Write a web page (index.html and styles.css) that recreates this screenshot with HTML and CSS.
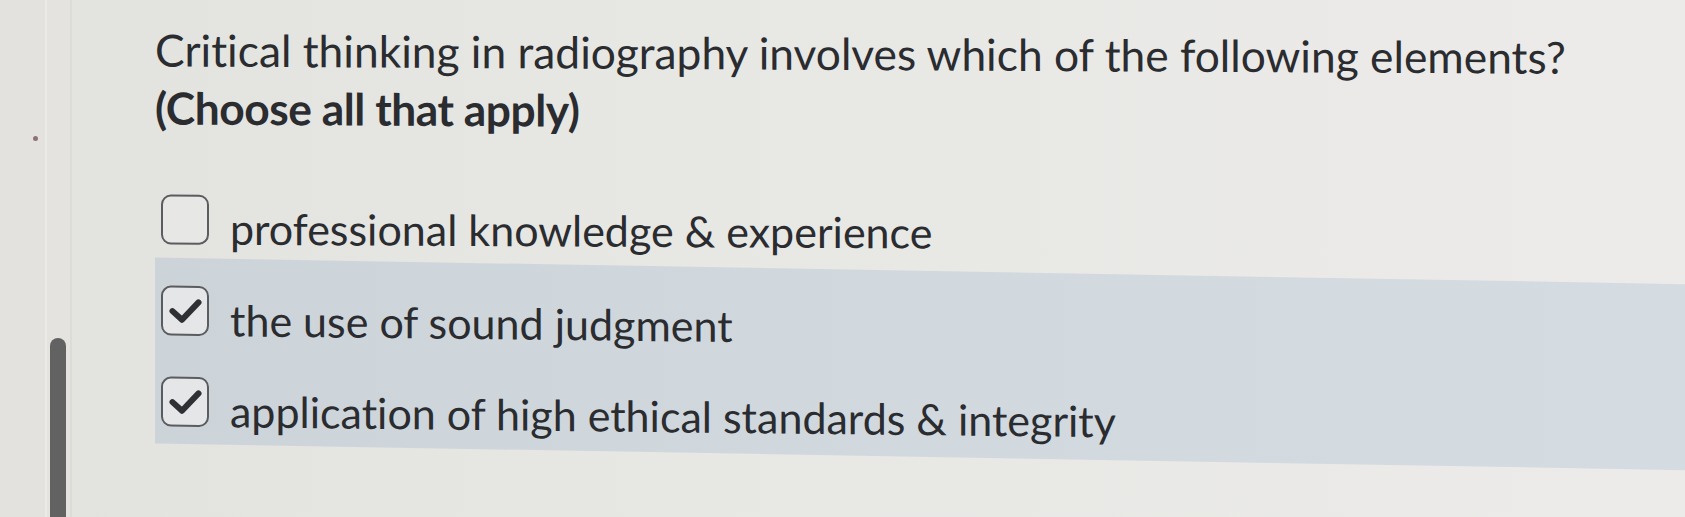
FILE: index.html
```html
<!DOCTYPE html>
<html lang="en">
<head>
<meta charset="utf-8">
<title>Critical thinking in radiography</title>
<link rel="stylesheet" href="styles.css">
</head>
<body>
<div class="page">
  <div class="rail"><span class="dot"></span></div>
  <div class="track"><div class="scrollbar"></div></div>
  <main class="main">
    <p class="question">Critical thinking in radiography involves which of the following elements?<br><span class="hint">(Choose all that apply)</span></p>
    <div class="options">
      <label class="option">
        <span class="box"></span>
        <span class="label">professional knowledge &amp; experience</span>
      </label>
      <div class="band">
        <label class="option">
          <span class="box checked"><svg viewBox="0 0 48 50" width="48" height="50"><path d="M11.5 25.5 L21 34 L37.5 16.5" /></svg></span>
          <span class="label">the use of sound judgment</span>
        </label>
        <label class="option">
          <span class="box checked"><svg viewBox="0 0 48 50" width="48" height="50"><path d="M11.5 25.5 L21 34 L37.5 16.5" /></svg></span>
          <span class="label">application of high ethical standards &amp; integrity</span>
        </label>
      </div>
    </div>
  </main>
</div>
</body>
</html>
```
FILE: styles.css
```css
html, body {
  margin: 0;
  padding: 0;
}
body {
  width: 1685px;
  height: 517px;
  overflow: hidden;
  background: linear-gradient(90deg, #e2e2df 0%, #e7e7e4 40%, #ecebe9 100%);
  font-family: Lato, "Open Sans", "Liberation Sans", sans-serif;
  font-variant-ligatures: none;
  color: #2b2d31;
}
.page {
  display: flex;
  height: 517px;
}
.rail {
  width: 47px;
  flex: none;
  background: #e3e2de;
  border-right: 2px solid #ebeae6;
  display: flex;
  flex-direction: column;
  padding-top: 136px;
  box-sizing: border-box;
  padding-left: 33px;
}
.dot {
  width: 5px;
  height: 5px;
  border-radius: 50%;
  background: #8c7377;
}
.track {
  width: 25px;
  flex: none;
  background: #e4e3df;
  border-right: 2px solid #dcdbd7;
  display: flex;
  flex-direction: column;
  padding-top: 338px;
  padding-left: 3px;
  box-sizing: border-box;
}
.scrollbar {
  width: 16px;
  flex: 1;
  background: #626262;
  border-radius: 8px 8px 0 0;
}
.main {
  flex: 1;
  padding-left: 83px;
  transform: skewY(0.3deg);
  transform-origin: 0 0;
}
.question {
  margin: 0;
  padding-top: 20px;
  font-size: 44.3px;
  line-height: 58px;
  font-weight: 400;
  color: #2a2c30;
}
.hint {
  font-weight: 700;
  letter-spacing: -0.45px;
}
.options {
  margin-top: 30px;
  display: flex;
  flex-direction: column;
}
.band {
  background: linear-gradient(90deg, #cdd4d9 0%, #d1d8de 50%, #d4dbe1 100%);
  padding-bottom: 4px;
  transform: skewY(0.7deg);
  transform-origin: 0 0;
}
.band .option {
  transform: skewY(-0.35deg);
  transform-origin: 0 0;
}
.option {
  display: flex;
  align-items: flex-start;
  height: 91px;
  padding-left: 6px;
}
.box {
  width: 48px;
  height: 50px;
  margin-top: 28px;
  box-sizing: border-box;
  border: 2.5px solid #5b5c5f;
  border-radius: 10px;
  background: #e7e7e5;
  flex: none;
  display: flex;
}
.box.checked {
  background: #e4e6e8;
}
.box svg {
  margin: -2.5px;
}
.box path {
  fill: none;
  stroke: #2e3033;
  stroke-width: 6;
  stroke-linecap: round;
  stroke-linejoin: round;
}
.label {
  margin-left: 21px;
  margin-top: 40px;
  font-size: 43px;
  line-height: 44px;
  color: #2a2c30;
}
```
